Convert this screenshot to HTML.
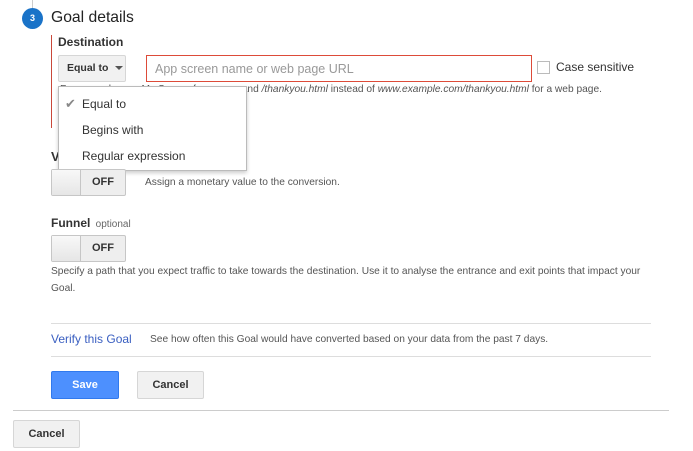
<!DOCTYPE html>
<html><head><meta charset="utf-8"><style>
*{margin:0;padding:0;box-sizing:border-box}
body{width:693px;height:451px;background:#fff;position:relative;overflow:hidden;font-family:"Liberation Sans",Arial,sans-serif;color:#222}
.a{position:absolute;white-space:nowrap}
.btn{position:absolute;background:#f1f1f1;border:1px solid #d6d6d6;border-radius:2px;font-size:11px;font-weight:bold;color:#333;text-align:center;white-space:nowrap}
.s{font-size:10.2px;color:#555}
.tog{position:absolute;width:75px;height:27px;border:1px solid #c6c6c6;border-radius:2px;background:#eee}
.tog .k{position:absolute;left:0;top:0;width:29px;height:25px;background:linear-gradient(#f8f8f8,#e6e6e6);border-right:1px solid #c6c6c6}
.tog .t{position:absolute;left:29px;width:44px;top:6px;text-align:center;font-size:11px;font-weight:bold;color:#333}
.hr{position:absolute;height:1px;background:#ddd}
</style></head><body>
<div class="a" style="left:32px;top:0;width:1px;height:8px;background:#ccc"></div>
<div class="a" style="left:22px;top:8px;width:21px;height:21px;border-radius:50%;background:#1a73c8;color:#fff;font-size:9px;font-weight:bold;text-align:center;line-height:21px">3</div>
<div class="a" style="left:51px;top:9px;font-size:15.7px;color:#222">Goal details</div>
<div class="a" style="left:51px;top:35px;width:1px;height:93px;background:#c9483a"></div>
<div class="a" style="left:58px;top:35px;font-size:12px;font-weight:bold;color:#333">Destination</div>
<div class="btn" style="left:58px;top:55px;width:68px;height:27px;line-height:25px;text-align:left;padding-left:8px;font-size:10.5px">Equal to <span style="display:inline-block;margin-left:4px;border-left:4px solid transparent;border-right:4px solid transparent;border-top:4px solid #555;vertical-align:middle"></span></div>
<div class="a" style="left:146px;top:55px;width:386px;height:27px;border:1px solid #dd4b39;font-size:12.5px;color:#999;padding:6px 0 0 8px">App screen name or web page URL</div>
<div class="a" style="left:537px;top:61px;width:13px;height:13px;border:1px solid #bbb"></div>
<div class="a" style="left:556px;top:60px;font-size:12px;color:#333">Case sensitive</div>
<div class="a s" style="left:60px;top:84px">For example, use My Screen for an app and <i>/thankyou.html</i> instead of <i>www.example.com/thankyou.html</i> for a web page.</div>
<div class="a" style="left:51px;top:149px;font-size:13px;font-weight:bold;color:#333">Value</div>
<div class="a" style="left:58px;top:86px;width:189px;height:85px;background:#fff;border:1px solid #bbb;box-shadow:0 2px 4px rgba(0,0,0,.2);font-size:12px;color:#333">
<div class="a" style="left:6px;top:9px;color:#888;font-size:13px">✔</div>
<div class="a" style="left:23px;top:10px">Equal to</div>
<div class="a" style="left:23px;top:36px">Begins with</div>
<div class="a" style="left:23px;top:62px">Regular expression</div>
</div>
<div class="tog" style="left:51px;top:169px"><div class="k"></div><div class="t">OFF</div></div>
<div class="a s" style="left:145px;top:177px">Assign a monetary value to the conversion.</div>
<div class="a" style="left:51px;top:216px;font-size:12px;font-weight:bold;color:#333">Funnel <span style="font-size:10px;font-weight:normal;color:#666;margin-left:2px">optional</span></div>
<div class="tog" style="left:51px;top:235px"><div class="k"></div><div class="t">OFF</div></div>
<div class="a s" style="left:51px;top:263px;white-space:normal;width:610px;line-height:17px">Specify a path that you expect traffic to take towards the destination. Use it to analyse the entrance and exit points that impact your Goal.</div>
<div class="hr" style="left:51px;top:323px;width:600px"></div>
<div class="a" style="left:51px;top:332px;font-size:12px;color:#3a5fc1">Verify this Goal</div>
<div class="a s" style="left:150px;top:334px">See how often this Goal would have converted based on your data from the past 7 days.</div>
<div class="hr" style="left:51px;top:356px;width:600px"></div>
<div class="btn" style="left:51px;top:371px;width:68px;height:28px;line-height:26px;background:#4d90fe;border-color:#3079ed;color:#fff">Save</div>
<div class="btn" style="left:137px;top:371px;width:67px;height:28px;line-height:26px">Cancel</div>
<div class="hr" style="left:13px;top:410px;width:656px;background:#ccc"></div>
<div class="btn" style="left:13px;top:420px;width:67px;height:28px;line-height:26px">Cancel</div>
</body></html>
